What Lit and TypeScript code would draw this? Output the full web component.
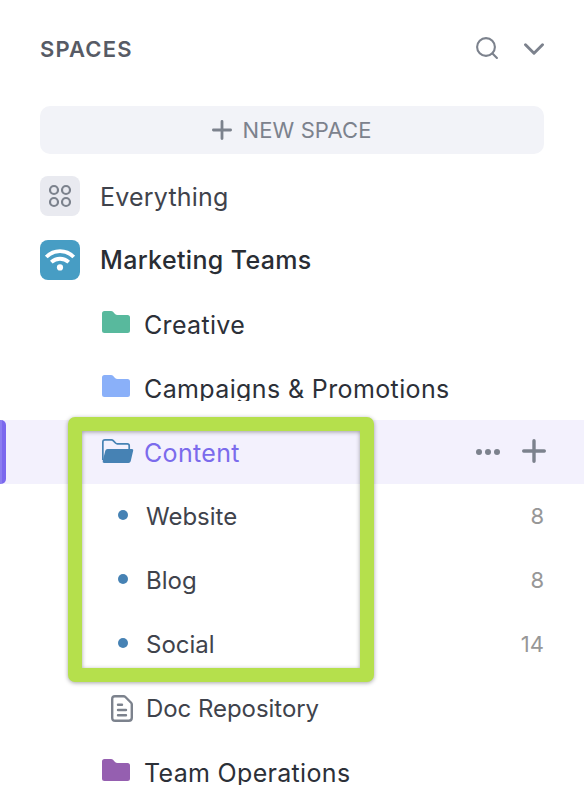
import { LitElement, html, css, svg, nothing } from "lit";
import { customElement, property } from "lit/decorators.js";
import { classMap } from "lit/directives/class-map.js";

const folder = svg`<path d="M2.500 0H9Q10.300 0 11 .800L13 3Q14 4 15.500 4H25.500Q28 4 28 6.500V19.500Q28 22 25.500 22H2.500Q0 22 0 19.500V2.500Q0 0 2.500 0Z" fill="currentColor"/>`;

const plus = (size: number, stroke: number) => {
  const c = size / 2;
  const e = stroke / 2;
  return html`<svg class="plus" width=${size} height=${size} viewBox="0 0 ${size} ${size}">
    <path d="M${c} ${e}V${size - e}M${e} ${c}H${size - e}" stroke="currentColor" stroke-width=${stroke} stroke-linecap="round" />
  </svg>`;
};

const icons: Record<string, unknown> = {
  everything: html`<svg width="40" height="40" viewBox="0 0 40 40" fill="none" stroke="#7c828d" stroke-width="2.200">
    <circle cx="14" cy="14" r="4" /><circle cx="26" cy="14" r="4" />
    <circle cx="14" cy="26" r="4" /><circle cx="26" cy="26" r="4" />
  </svg>`,
  wifi: html`<svg width="40" height="40" viewBox="0 0 40 40" fill="none" stroke="#fff" stroke-width="3.800">
    <path d="M6.300 17C14 9.200 26 9.200 33.700 17" />
    <path d="M11.300 22.100C16.200 17.600 23.800 17.600 28.700 22.100" />
    <circle cx="20" cy="27.400" r="3.100" fill="#fff" stroke="none" />
  </svg>`,
  folder: html`<svg width="28" height="22" viewBox="0 0 28 22">${folder}</svg>`,
  open: html`<svg width="32" height="24" viewBox="0 0 32 24">
    <path d="M.850 21V3Q.850 .850 3 .850H9.500Q10.500 .850 11.200 1.600L13.500 4Q14.300 4.850 15.300 4.850H25.300Q27.200 4.850 27.200 6.700V11" fill="none" stroke="currentColor" stroke-width="1.700" />
    <path d="M5.500 10H30Q31.600 10 31.200 11.600L28.700 22.200Q28.200 24 26.500 24H2.200Q.200 24 .700 22L3.300 11.700Q3.700 10 5.500 10Z" fill="currentColor" />
  </svg>`,
  doc: html`<svg width="22" height="27" viewBox="0 0 22 27" fill="none" stroke="currentColor" stroke-width="2.400" stroke-linecap="round">
    <path d="M4 1.200H12.500Q13.600 1.200 14.400 2L19.900 7.500Q20.800 8.400 20.800 9.600V22.800Q20.800 25.800 17.800 25.800H4.200Q1.200 25.800 1.200 22.800V4.200Q1.200 1.200 4 1.200Z" />
    <path d="M7 9.700H11M7 15H15M7 20.300H15" />
  </svg>`,
  dot: html`<svg width="10" height="10" viewBox="0 0 10 10"><circle cx="5" cy="5" r="5" fill="currentColor" /></svg>`,
};

type Item = { kind: string; icon: string; label: string; count?: number; active?: boolean; name: string };

const items: Item[] = [
  { kind: "space", icon: "everything", label: "Everything", name: "everything" },
  { kind: "space", icon: "wifi", label: "Marketing Teams", name: "marketing" },
  { kind: "folder", icon: "folder", label: "Creative", name: "creative" },
  { kind: "folder", icon: "folder", label: "Campaigns & Promotions", name: "campaigns" },
  { kind: "folder", icon: "open", label: "Content", active: true, name: "content" },
  { kind: "list", icon: "dot", label: "Website", count: 8, name: "website" },
  { kind: "list", icon: "dot", label: "Blog", count: 8, name: "blog" },
  { kind: "list", icon: "dot", label: "Social", count: 14, name: "social" },
  { kind: "list", icon: "doc", label: "Doc Repository", name: "doc" },
  { kind: "folder", icon: "folder", label: "Team Operations", name: "team" },
];

@customElement("space-row")
export class SpaceRow extends LitElement {
  @property({ attribute: false }) item!: Item;

  static styles = css`
    :host { display: block; }
    svg { display: block; flex: none; }
    .row { display: flex; align-items: center; height: 64px; box-sizing: border-box; padding: 0 40px; font-size: 25px; color: #3f434c; }
    .icon { flex: none; display: flex; align-items: center; }
    .label { white-space: nowrap; line-height: 40px; padding-top: 2px; flex: none; }
    .space .icon { width: 60px; }
    .space .icon svg { border-radius: 8px; }
    .everything .icon svg { background: #e9eaf0; }
    .everything .label { letter-spacing: 0.2px; }
    .marketing .icon svg { background: #479dc4; }
    .marketing { color: #292d34; font-weight: 500; }
    .marketing .label { padding-top: 0; letter-spacing: 0.35px; }
    .folder { padding-left: 102px; color: #2c3038; letter-spacing: 0.32px; }
    .folder .icon { width: 42px; padding-bottom: 4px; }
    .folder.content .icon { padding-bottom: 2px; }
    .list { padding-left: 118px; font-size: 24px; }
    .list .icon { width: 28px; padding-bottom: 2px; }
    .list.doc { padding-left: 111px; }
    .list.doc .icon { width: 35px; padding-bottom: 0; color: #7c828d; }
    .doc .label { letter-spacing: -0.05px; }
    .creative .icon { color: #58b99d; }
    .campaigns .icon { color: #8ab0f9; }
    .content .icon, .dot-color .icon { color: #4682b4; }
    .team .icon { color: #955fb0; }
    .campaigns .label, .team .label { line-height: 28px; height: 26px; padding-top: 0; overflow: hidden; }
    .campaigns .label { letter-spacing: 0.38px; }
    .active { position: relative; background: #f3f1fd; color: #7b6bec; }
    .bar { position: absolute; left: 0; top: 0; width: 6px; height: 64px; border-radius: 0 5px 5px 0; background: linear-gradient(90deg, #8b7df0 0 2px, #7b68ee 2px); }
    .actions { display: flex; align-items: center; gap: 22px; margin: 0 -2px 0 auto; color: #7c828d; }
    .actions .plus { margin-bottom: 2px; }
    .count { margin-left: auto; font-size: 22px; color: #979797; }
  `;

  render() {
    const { kind, icon, label, count, active, name } = this.item;
    return html`<div class=${classMap({ row: true, [kind]: true, [name]: true, active: !!active, "dot-color": icon === "dot" })}>
      ${active ? html`<span class="bar"></span>` : nothing}
      <span class="icon">${icons[icon]}</span>
      <span class="label">${label}</span>
      ${count ? html`<span class="count">${count}</span>` : nothing}
      ${active
        ? html`<span class="actions">
            <svg width="24" height="6" viewBox="0 0 24 6" fill="currentColor"><circle cx="3" cy="3" r="3" /><circle cx="12" cy="3" r="3" /><circle cx="21" cy="3" r="3" /></svg>
            ${plus(24, 3.4)}
          </span>`
        : nothing}
    </div>`;
  }
}

@customElement("app-root")
export class AppRoot extends LitElement {
  static styles = css`
    :host { display: block; position: relative; width: 584px; height: 812px; overflow: hidden; background: #fff; font-family: Inter, "Liberation Sans", sans-serif; }
    svg { display: block; flex: none; }
    .header { display: flex; align-items: center; height: 98px; padding: 0 40px; color: #7c828d; }
    .title { margin-right: auto; font-size: 22px; font-weight: 600; letter-spacing: 1.15px; color: #575b65; }
    .tools { display: flex; align-items: center; gap: 26px; }
    .search { margin-bottom: 2px; }
    .new { display: flex; align-items: center; justify-content: center; gap: 10px; height: 48px; margin: 8px 40px 10px; border-radius: 10px; background: #f2f3f8; color: #7c828d; font-size: 22px; letter-spacing: 0.12px; }
    .highlight { position: absolute; left: 68px; top: 417px; width: 306px; height: 265px; box-sizing: border-box; border: 14px solid #b5e04c; border-radius: 7px; filter: drop-shadow(0 1px 2px rgba(0, 0, 0, 0.35)); }
  `;

  render() {
    return html`
      <div class="header">
        <span class="title">SPACES</span>
        <span class="tools">
          <svg class="search" width="22" height="22" viewBox="0 0 22 22" fill="none" stroke="currentColor" stroke-width="2.100" stroke-linecap="round">
            <circle cx="10" cy="10" r="8.900" /><path d="M16.500 16.500L20.900 20.900" />
          </svg>
          <svg width="20" height="12" viewBox="0 0 20 12" fill="none" stroke="currentColor" stroke-width="2.900" stroke-linecap="round" stroke-linejoin="round">
            <path d="M1.500 1.700L10 10.200L18.500 1.700" />
          </svg>
        </span>
      </div>
      <div class="new">${plus(20, 2.8)}<span>NEW SPACE</span></div>
      ${items.map((item) => html`<space-row .item=${item}></space-row>`)}
      <div class="highlight"></div>
    `;
  }
}
